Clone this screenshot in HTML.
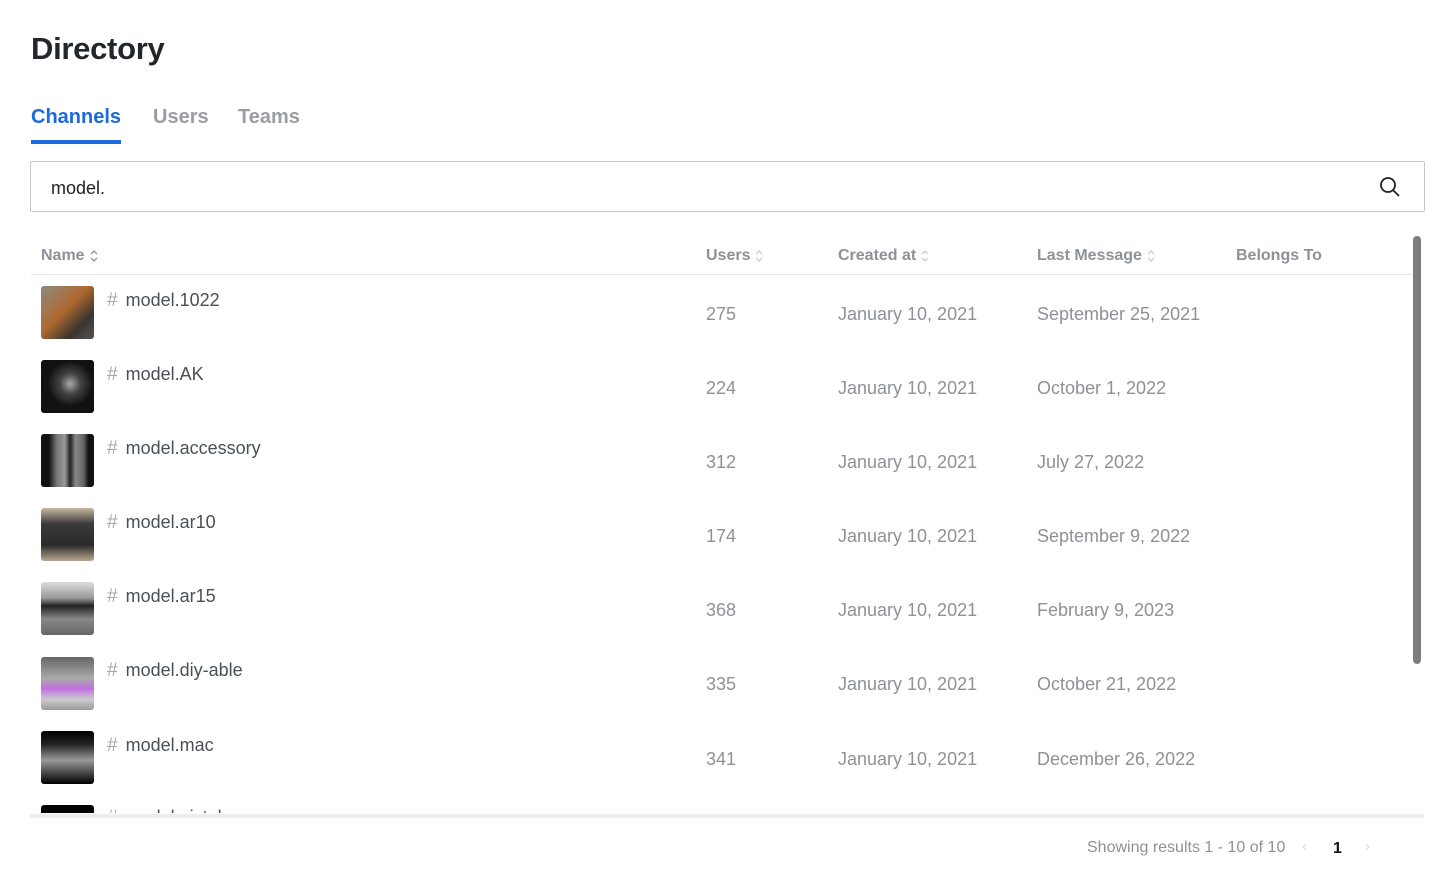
<!DOCTYPE html>
<html><head><meta charset="utf-8"><style>
*{box-sizing:border-box;margin:0;padding:0}
body{width:1456px;height:875px;background:#fff;font-family:"Liberation Sans",sans-serif;position:relative;overflow:hidden}
.abs{position:absolute;white-space:nowrap}
h1{position:absolute;left:31px;top:31px;font-size:31px;font-weight:bold;color:#23262b;letter-spacing:-0.3px}
.tab{position:absolute;top:106px;font-size:20px;font-weight:bold;color:#9a9da3}
.search{position:absolute;left:30px;top:161px;width:1395px;height:51px;border:1px solid #c4c6ca;border-radius:2px}
.hdr{position:absolute;top:247px;font-size:16px;font-weight:bold;color:#8e9197}
.sort{display:inline-block;margin-left:4px;vertical-align:middle}
.th{position:absolute;left:41px;width:53px;height:53px;border-radius:3px}
.nm{position:absolute;left:107px;font-size:18px;color:#4a4f58}
.nm span{color:#a4a7ad;margin-right:8px;font-size:19px;font-weight:300}
.c{position:absolute;font-size:18px;color:#8e9197}
</style></head><body>
<h1>Directory</h1>
<div class="tab" style="left:31px;color:#1c6ae0">Channels</div>
<div class="abs" style="left:31px;top:140px;width:90px;height:4px;background:#1c6ae0"></div>
<div class="tab" style="left:153px">Users</div>
<div class="tab" style="left:238px">Teams</div>
<div class="search"><div class="abs" style="left:20px;top:16px;font-size:18px;color:#222">model.</div>
<svg class="abs" style="left:1348px;top:14px" width="22" height="22" viewBox="0 0 22 22"><circle cx="9" cy="9" r="7" fill="none" stroke="#222" stroke-width="1.8"/><path d="M14 14l6 6" stroke="#222" stroke-width="1.8"/></svg></div>
<div class="hdr" style="left:41px">Name<svg class="sort" width="10" height="14" viewBox="0 0 10 14"><path d="M2 5l3-3 3 3M2 9l3 3 3-3" fill="none" stroke="#8e9197" stroke-width="1.3"/></svg></div>
<div class="hdr" style="left:706px">Users<svg class="sort" width="10" height="14" viewBox="0 0 10 14"><path d="M2 5l3-3 3 3M2 9l3 3 3-3" fill="none" stroke="#c8cacd" stroke-width="1.3"/></svg></div>
<div class="hdr" style="left:838px">Created at<svg class="sort" width="10" height="14" viewBox="0 0 10 14"><path d="M2 5l3-3 3 3M2 9l3 3 3-3" fill="none" stroke="#c8cacd" stroke-width="1.3"/></svg></div>
<div class="hdr" style="left:1037px">Last Message<svg class="sort" width="10" height="14" viewBox="0 0 10 14"><path d="M2 5l3-3 3 3M2 9l3 3 3-3" fill="none" stroke="#c8cacd" stroke-width="1.3"/></svg></div>
<div class="hdr" style="left:1236px">Belongs To</div>
<div class="abs" style="left:30px;top:274px;width:1382px;height:1px;background:#e6e7e9"></div>
<div class="abs" style="left:1413px;top:236px;width:8px;height:428px;background:#7d7d7d;border-radius:4px"></div>
<div class="abs" style="left:0;top:0;width:1410px;height:813px;overflow:hidden">
<div class="th" style="top:286px;background:linear-gradient(135deg,#8a8a80 0%,#b06a30 45%,#3a3530 75%,#555 100%)"></div>
<div class="nm" style="top:290px"><span>#</span>model.1022</div>
<div class="c" style="left:706px;top:304px">275</div><div class="c" style="left:838px;top:304px">January 10, 2021</div><div class="c" style="left:1037px;top:304px">September 25, 2021</div>

<div class="th" style="top:360px;background:radial-gradient(circle at 55% 45%,#aaa 0%,#444 25%,#111 55%)"></div>
<div class="nm" style="top:364px"><span>#</span>model.AK</div>
<div class="c" style="left:706px;top:378px">224</div><div class="c" style="left:838px;top:378px">January 10, 2021</div><div class="c" style="left:1037px;top:378px">October 1, 2022</div>

<div class="th" style="top:434px;background:linear-gradient(90deg,#111 15%,#777 30%,#999 45%,#222 55%,#888 65%,#666 80%,#111 90%)"></div>
<div class="nm" style="top:438px"><span>#</span>model.accessory</div>
<div class="c" style="left:706px;top:452px">312</div><div class="c" style="left:838px;top:452px">January 10, 2021</div><div class="c" style="left:1037px;top:452px">July 27, 2022</div>

<div class="th" style="top:508px;background:linear-gradient(180deg,#c8b8a0 0%,#3a3a3a 30%,#2a2a2a 70%,#b8a890 100%)"></div>
<div class="nm" style="top:512px"><span>#</span>model.ar10</div>
<div class="c" style="left:706px;top:526px">174</div><div class="c" style="left:838px;top:526px">January 10, 2021</div><div class="c" style="left:1037px;top:526px">September 9, 2022</div>

<div class="th" style="top:582px;background:linear-gradient(180deg,#ddd 0%,#999 30%,#222 45%,#888 70%,#666 100%)"></div>
<div class="nm" style="top:586px"><span>#</span>model.ar15</div>
<div class="c" style="left:706px;top:600px">368</div><div class="c" style="left:838px;top:600px">January 10, 2021</div><div class="c" style="left:1037px;top:600px">February 9, 2023</div>

<div class="th" style="top:657px;background:linear-gradient(180deg,#666 0%,#aaa 40%,#c070e0 60%,#ccc 80%,#999 100%)"></div>
<div class="nm" style="top:660px"><span>#</span>model.diy-able</div>
<div class="c" style="left:706px;top:674px">335</div><div class="c" style="left:838px;top:674px">January 10, 2021</div><div class="c" style="left:1037px;top:674px">October 21, 2022</div>

<div class="th" style="top:731px;background:linear-gradient(180deg,#000 0%,#222 25%,#999 55%,#555 75%,#000 100%)"></div>
<div class="nm" style="top:735px"><span>#</span>model.mac</div>
<div class="c" style="left:706px;top:749px">341</div><div class="c" style="left:838px;top:749px">January 10, 2021</div><div class="c" style="left:1037px;top:749px">December 26, 2022</div>

<div class="th" style="top:805px;background:#000"></div>
<div class="nm" style="top:807px"><span>#</span>model.pistol</div>
</div>
<div class="abs" style="left:30px;top:814px;width:1394px;height:4px;background:#ececec"></div>
<div class="abs" style="left:1087px;top:839px;font-size:16px;color:#8e9197">Showing results 1 - 10 of 10</div>
<div class="abs" style="left:1302px;top:838px;font-size:15px;color:#d4d5d8">‹</div>
<div class="abs" style="left:1333px;top:840px;font-size:16px;font-weight:bold;color:#111">1</div>
<div class="abs" style="left:1365px;top:838px;font-size:15px;color:#d4d5d8">›</div>
</body></html>
